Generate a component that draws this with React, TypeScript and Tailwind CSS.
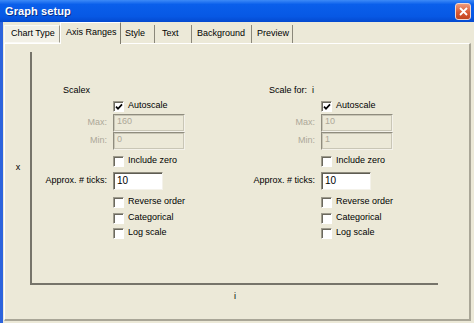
import React from 'react';

function Check({ checked = false }: { checked?: boolean }) {
  return (
    <span className="relative w-[11px] h-[11px] shrink-0 bg-white border border-t-[#9D9A8C] border-l-[#9D9A8C] border-r-white border-b-white shadow-[inset_1px_1px_0_#6B695E]">
      {checked && (
        <svg className="absolute left-[1px] top-[1px]" width="8" height="8" viewBox="0 0 8 8">
          <path d="M1 3.6 L3 5.8 L7 1.4" fill="none" stroke="#000" strokeWidth="1.7" />
        </svg>
      )}
    </span>
  );
}

function Box({ value, disabled = false, wide = true }: { value: string; disabled?: boolean; wide?: boolean }) {
  return (
    <div
      className={`ml-[6px] h-[18px] ${wide ? 'w-[72px]' : 'w-[50px]'} flex items-center pl-[3px] pb-[2px] border border-t-[#8F8C7E] border-l-[#8F8C7E] border-r-[#F4F2EA] border-b-[#F4F2EA] ${
        disabled ? 'bg-[#ECE9D8] text-[#ACA899] shadow-[inset_1px_1px_0_#C9C6B6,inset_-1px_-1px_0_#C9C6B6]' : 'bg-white text-black text-[10px] shadow-[inset_1px_1px_0_#5E5C52]'
      }`}
    >
      {value}
    </div>
  );
}

function CheckRow({ label, checked = false, className }: { label: string; checked?: boolean; className: string }) {
  return (
    <div className={`h-[14px] flex items-center pl-[73px] ${className}`}>
      <Check checked={checked} />
      <span className="ml-[4px]">{label}</span>
    </div>
  );
}

function AxisColumn({ title, titlePad, max, min, ticks }: { title: string; titlePad: string; max: string; min: string; ticks: string }) {
  return (
    <div className="w-[208px] shrink-0 flex flex-col">
      <div className={`h-[12px] leading-[12px] ${titlePad}`}>{title}</div>
      <CheckRow label="Autoscale" checked className="mt-[3px]" />
      <div className="mt-[1px] flex items-center">
        <span className="w-[67px] text-right text-[#ACA899]">Max:</span>
        <Box value={max} disabled />
      </div>
      <div className="flex items-center">
        <span className="w-[67px] text-right text-[#ACA899]">Min:</span>
        <Box value={min} disabled />
      </div>
      <CheckRow label="Include zero" className="mt-[4px]" />
      <div className="mt-[4px] flex items-center">
        <span className="w-[67px] text-right whitespace-nowrap">Approx. # ticks:</span>
        <Box value={ticks} wide={false} />
      </div>
      <CheckRow label="Reverse order" className="mt-[5px]" />
      <CheckRow label="Categorical" className="mt-[2px]" />
      <CheckRow label="Log scale" className="mt-[1px]" />
    </div>
  );
}

const tabs = [
  { name: 'Chart Type', cls: 'w-[56px] pl-[6px] bg-[#F2F0E6] border border-[#FBFAF6] border-r-[#9A978A]' },
  { name: 'Axis Ranges', cls: 'w-[61px] pl-[5px] -mt-[3px] h-[22px] border-t border-l border-white border-r border-r-[#7E7B6E]', active: true },
  { name: 'Style', cls: 'w-[34px] pl-[4px] border-r border-r-[#8A877A]' },
  { name: 'Text', cls: 'w-[37px] pl-[7px] border-r border-r-[#8A877A]' },
  { name: 'Background', cls: 'w-[60px] pl-[5px] border-r border-r-[#8A877A]' },
  { name: 'Preview', cls: 'w-[41px] pl-[5px] border-r border-r-[#8A877A]' },
];

export default function App() {
  return (
    <div className="w-[474px] h-[323px] overflow-hidden bg-[#ECE9D8] font-['Liberation_Sans',Arial,sans-serif] text-[9px] text-black flex flex-col">
      {/* Title bar */}
      <div className="h-[22px] shrink-0 flex items-center justify-between pl-[5px] pr-[3px] bg-[linear-gradient(to_bottom,#3d8af7_0%,#0a5feb_20%,#0758e4_75%,#0449cf_100%)]">
        <span className="text-white font-bold text-[11px] tracking-[0.1px] [text-shadow:1px_1px_0_#0a2f8a]">Graph setup</span>
        <div className="w-[16px] h-[17px] rounded-[3px] border border-[#F4D7CC] bg-[linear-gradient(to_bottom,#EE9A7C,#D95A34_55%,#C2441E)] flex items-center justify-center">
          <svg width="9" height="9" viewBox="0 0 9 9">
            <path d="M1 1 L8 8 M8 1 L1 8" stroke="#fff" strokeWidth="1.8" />
          </svg>
        </div>
      </div>

      {/* Body */}
      <div className="flex-1 flex flex-col border-l-[3px] border-[#2D64DC]">
        {/* Tabs */}
        <div className="h-[21px] shrink-0 flex items-end pl-[1px] pt-[3px]">
          {tabs.map((t) => (
            <div
              key={t.name}
              className={`h-[18px] flex items-center whitespace-nowrap bg-[#ECE9D8] ${t.active ? 'relative z-10 -mb-[1px] pb-[1px]' : ''} ${t.cls}`}
            >
              {t.name}
            </div>
          ))}
        </div>

        {/* Panel */}
        <div className="ml-[1px] w-[467px] h-[278px] border-t border-l border-white border-r-2 border-r-[#A9A697] border-b-2 border-b-[#A9A697] flex flex-col">
          <div className="flex mt-[8px]">
            <div className="w-[25px] flex items-center justify-center pb-[2px] pl-[1px]">x</div>
            <div className="w-[408px] h-[233px] border-l-2 border-b-2 border-[#76746A] pl-[8px] pt-[32px] flex">
              <AxisColumn title="Scalex" titlePad="pl-[23px]" max="160" min="0" ticks="10" />
              <AxisColumn title="Scale for:  i" titlePad="pl-[21px] whitespace-pre" max="10" min="1" ticks="10" />
            </div>
          </div>
          <div className="ml-[25px] w-[408px] text-center mt-[5px] pl-[2px]">i</div>
        </div>
      </div>
    </div>
  );
}
